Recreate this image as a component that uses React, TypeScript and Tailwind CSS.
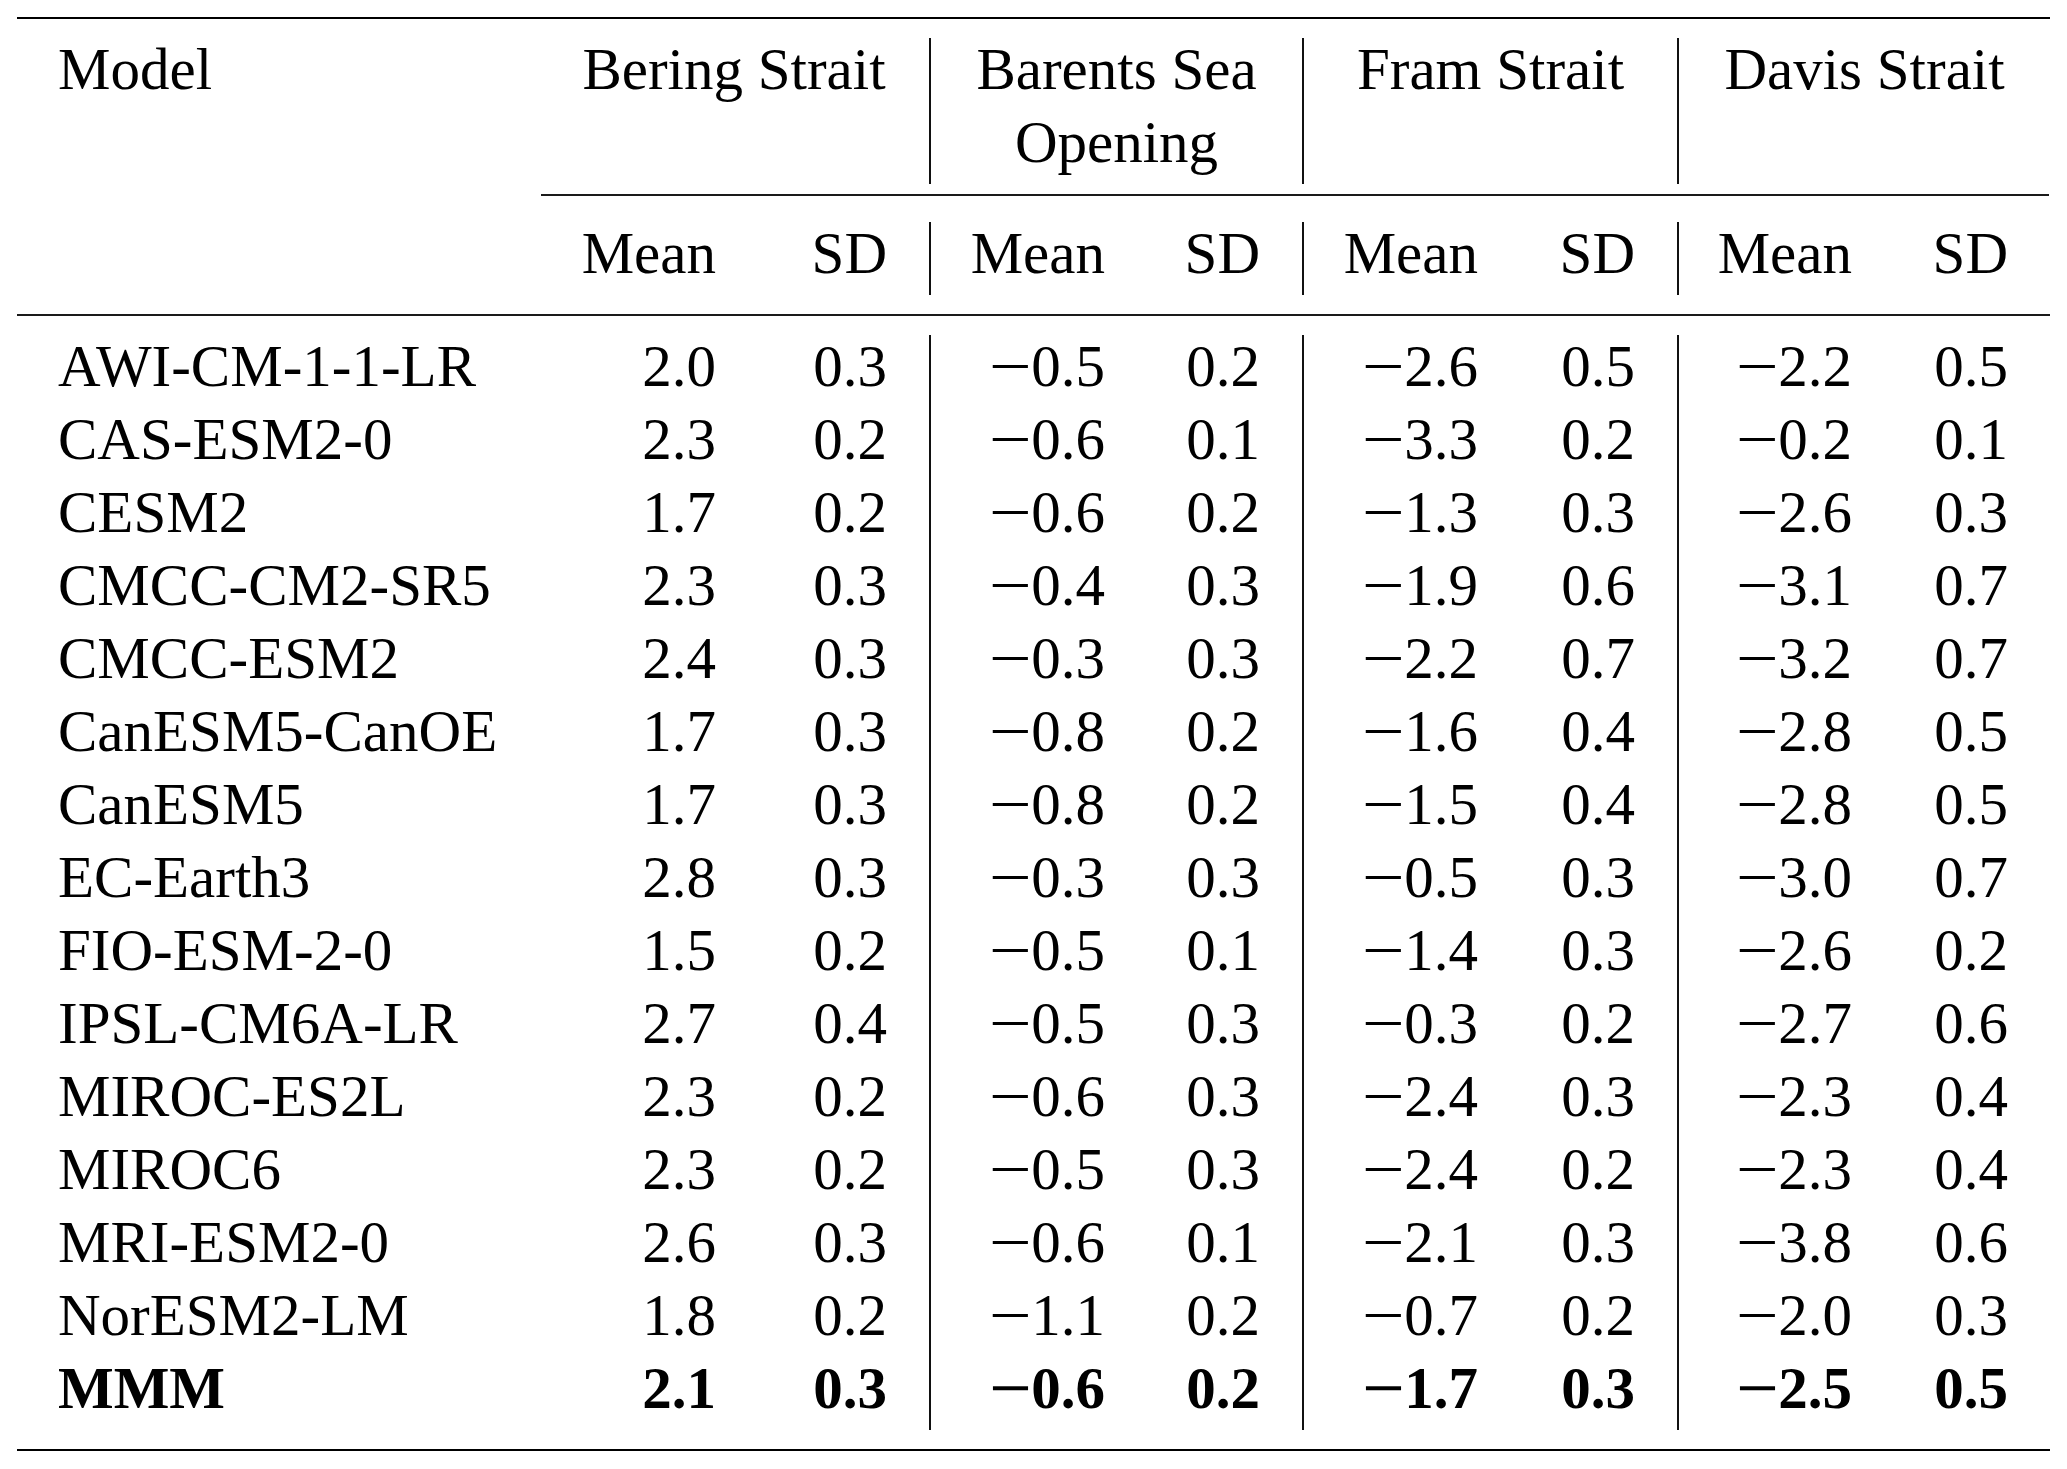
import React from "react";

const cols = "grid grid-cols-[522px_219px_171px_218px_155px_218px_157px_217px_156px]";

const rows: [string, string[]][] = [
  ["AWI-CM-1-1-LR", ["2.0", "0.3", "-0.5", "0.2", "-2.6", "0.5", "-2.2", "0.5"]],
  ["CAS-ESM2-0", ["2.3", "0.2", "-0.6", "0.1", "-3.3", "0.2", "-0.2", "0.1"]],
  ["CESM2", ["1.7", "0.2", "-0.6", "0.2", "-1.3", "0.3", "-2.6", "0.3"]],
  ["CMCC-CM2-SR5", ["2.3", "0.3", "-0.4", "0.3", "-1.9", "0.6", "-3.1", "0.7"]],
  ["CMCC-ESM2", ["2.4", "0.3", "-0.3", "0.3", "-2.2", "0.7", "-3.2", "0.7"]],
  ["CanESM5-CanOE", ["1.7", "0.3", "-0.8", "0.2", "-1.6", "0.4", "-2.8", "0.5"]],
  ["CanESM5", ["1.7", "0.3", "-0.8", "0.2", "-1.5", "0.4", "-2.8", "0.5"]],
  ["EC-Earth3", ["2.8", "0.3", "-0.3", "0.3", "-0.5", "0.3", "-3.0", "0.7"]],
  ["FIO-ESM-2-0", ["1.5", "0.2", "-0.5", "0.1", "-1.4", "0.3", "-2.6", "0.2"]],
  ["IPSL-CM6A-LR", ["2.7", "0.4", "-0.5", "0.3", "-0.3", "0.2", "-2.7", "0.6"]],
  ["MIROC-ES2L", ["2.3", "0.2", "-0.6", "0.3", "-2.4", "0.3", "-2.3", "0.4"]],
  ["MIROC6", ["2.3", "0.2", "-0.5", "0.3", "-2.4", "0.2", "-2.3", "0.4"]],
  ["MRI-ESM2-0", ["2.6", "0.3", "-0.6", "0.1", "-2.1", "0.3", "-3.8", "0.6"]],
  ["NorESM2-LM", ["1.8", "0.2", "-1.1", "0.2", "-0.7", "0.2", "-2.0", "0.3"]],
  ["MMM", ["2.1", "0.3", "-0.6", "0.2", "-1.7", "0.3", "-2.5", "0.5"]],
];

const groups = [["Bering Strait"], ["Barents Sea", "Opening"], ["Fram Strait"], ["Davis Strait"]];

// LaTeX math minus is wider than the text one
function Num({ v }: { v: string }) {
  if (!v.startsWith("-")) return <>{v}</>;
  return (
    <>
      <span className="inline-block w-[42px] text-left">
        <span className="inline-block origin-left scale-x-[1.28]">−</span>
      </span>
      {v.slice(1)}
    </>
  );
}

const line = "leading-[63px] pb-[10px]";

export default function App() {
  return (
    <div className="min-h-screen w-[2067px] bg-white font-['Liberation_Serif',serif] text-[59px] text-black">
      <div className="ml-[17px] w-[2033px] pt-[17px]">
        {/* top rule */}
        <div className="h-[2px] bg-black" />

        {/* group headers */}
        <div className={`${cols} mt-[19px]`}>
          <div className={`pl-[41px] ${line}`}>Model</div>
          {groups.map((g, i) => (
            <div
              key={i}
              className={`col-span-2 px-[42px] text-center h-[146px] ${i > 0 ? "border-l-2 border-[#111]" : ""}`}
            >
              {g.map((t) => (
                <div key={t} className={`${line} whitespace-nowrap`}>
                  {t}
                </div>
              ))}
            </div>
          ))}
        </div>

        {/* cmidrule */}
        <div className="mt-[10px] ml-[524px] mr-[1px] h-[2px] bg-[#1a1a1a]" />

        {/* Mean / SD */}
        <div className={`${cols} mt-[26px]`}>
          <div />
          {groups.map((_, i) => (
            <React.Fragment key={i}>
              <div className={`pr-[42px] text-right ${line} ${i > 0 ? "border-l-2 border-[#111]" : ""}`}>Mean</div>
              <div className={`pr-[42px] text-right ${line}`}>SD</div>
            </React.Fragment>
          ))}
        </div>

        {/* midrule */}
        <div className="mt-[19px] h-[2px] bg-[#1a1a1a]" />

        {/* body */}
        <div className="mt-[19px]">
          {rows.map(([name, vals]) => (
            <div key={name} className={`${cols} ${name === "MMM" ? "font-bold" : ""}`}>
              <div className={`pl-[41px] whitespace-nowrap ${line}`}>{name}</div>
              {vals.map((v, j) => (
                <div
                  key={j}
                  className={`pr-[42px] text-right whitespace-nowrap ${line} ${
                    j % 2 === 0 && j > 0 ? "border-l-2 border-[#111]" : ""
                  }`}
                >
                  <Num v={v} />
                </div>
              ))}
            </div>
          ))}
        </div>

        {/* bottom rule */}
        <div className="mt-[19px] h-[2px] bg-black" />
      </div>
    </div>
  );
}
